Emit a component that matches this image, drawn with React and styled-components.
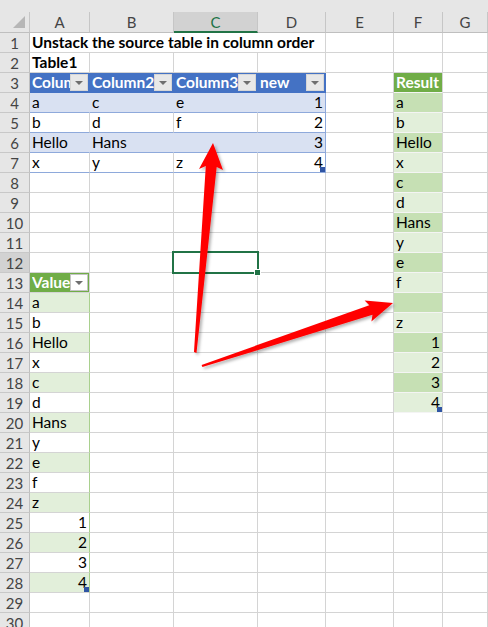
import React from "react";
import styled, { createGlobalStyle } from "styled-components";

const GRID = "#d4d4d4";
const BLUE_HEAD = "#4472c4";
const BLUE_BAND = "#d9e1f2";
const BLUE_LINE = "#8ea9db";
const GREEN_HEAD = "#70ad47";
const GREEN_DARK = "#c6e0b4";
const GREEN_LIGHT = "#e2efda";
const GREEN_EDGE = "#a9d08e";
const XL_GREEN = "#217346";

const GlobalStyle = createGlobalStyle`
  html, body { margin: 0; padding: 0; background: #fff; overflow: hidden; }
  body { font-family: Lato, "Liberation Sans", sans-serif; }
`;

const Sheet = styled.div`
  position: relative;
  width: 488px;
  height: 627px;
  overflow: hidden;
  display: grid;
  grid-template-columns: 30px 60px 84px 84px 68px 68px 49px 45px;
  grid-template-rows: 12px 21px repeat(30, 20px);
  font-family: Lato, "Liberation Sans", sans-serif;
  font-size: 15.5px;
  color: #000;
  background: #fff;
`;

const TopStrip = styled.div`
  grid-column: 1 / -1;
  background: #e6e6e6;
`;

const Corner = styled.div`
  position: relative;
  box-sizing: border-box;
  background: #e6e6e6;
  border-right: 1px solid #c6c6c6;
  border-bottom: 1px solid #bfbfbf;
  &::after {
    content: "";
    position: absolute;
    right: 4px;
    bottom: 4px;
    border-style: solid;
    border-width: 0 0 12px 12px;
    border-color: transparent transparent #b6b6b6 transparent;
  }
`;

const ColHead = styled.div`
  box-sizing: border-box;
  display: flex;
  align-items: center;
  justify-content: center;
  line-height: 18px;
  font-size: 15px;
  background: ${(p) => (p.$active ? "#d2d2d2" : "#e6e6e6")};
  color: ${(p) => (p.$active ? XL_GREEN : "#444")};
  border-right: 1px solid #c6c6c6;
  border-bottom: ${(p) => (p.$active ? `2px solid ${XL_GREEN}` : "1px solid #bfbfbf")};
`;

const RowHead = styled.div`
  box-sizing: border-box;
  display: flex;
  align-items: center;
  justify-content: center;
  line-height: 18px;
  font-size: 15px;
  background: ${(p) => (p.$active ? "#d2d2d2" : "#e6e6e6")};
  color: #444;
  border-right: 1px solid #bfbfbf;
  border-bottom: 1px solid #c8c8c8;
`;

const Cell = styled.div`
  position: relative;
  box-sizing: border-box;
  display: flex;
  align-items: flex-end;
  justify-content: ${(p) => (p.$align === "right" ? "flex-end" : "flex-start")};
  padding: 0 2px 1px 2px;
  line-height: 18px;
  white-space: nowrap;
  grid-column: span ${(p) => p.$span || 1};
  background: ${(p) => p.$bg};
  border-right: 1px solid ${(p) => p.$br};
  border-bottom: 1px solid ${(p) => p.$bb};
  font-weight: ${(p) => (p.$bold ? 700 : 400)};
  z-index: ${(p) => (p.$raised ? 2 : "auto")};
`;

const HeadCell = styled.div`
  box-sizing: border-box;
  display: flex;
  align-items: center;
  padding: 0 1px 0 2px;
  background: ${(p) => p.$bg};
  border-right: 1px solid ${(p) => p.$br};
  border-bottom: 1px solid ${(p) => p.$bb};
  color: #fff;
  font-weight: 700;
`;

const HeadLabel = styled.div`
  flex: 1;
  min-width: 0;
  overflow: hidden;
  white-space: nowrap;
  align-self: flex-end;
  line-height: 18px;
  padding-bottom: 1px;
`;

const DropButton = styled.div`
  flex: none;
  box-sizing: border-box;
  width: 18px;
  height: 17px;
  display: flex;
  align-items: center;
  justify-content: center;
  background: ${(p) => (p.$variant === "white" ? "#ffffff" : "#e8e8e8")};
  border: 1px solid ${(p) => (p.$variant === "white" ? "#c4c4c4" : "#d6d6d6")};
`;

const Caret = styled.span`
  width: 0;
  height: 0;
  border-left: 4px solid transparent;
  border-right: 4px solid transparent;
  border-top: 4px solid #6f6f6f;
  margin-top: 1px;
`;

const ResizeHandle = styled.span`
  position: absolute;
  right: 0;
  bottom: 0;
  width: 5px;
  height: 5px;
  background: #2f55a4;
`;

const Selection = styled.span`
  position: absolute;
  left: -2px;
  top: -2px;
  right: -2px;
  bottom: -2px;
  border: 2px solid ${XL_GREEN};
  pointer-events: none;
  &::after {
    content: "";
    position: absolute;
    right: -4px;
    bottom: -4px;
    width: 5px;
    height: 5px;
    background: ${XL_GREEN};
    border: 1px solid #fff;
  }
`;

const Overlay = styled.svg`
  position: absolute;
  left: 0;
  top: 0;
  pointer-events: none;
  z-index: 5;
`;

const COLS = ["A", "B", "C", "D", "E", "F", "G"];
const TABLE = [
  ["a", "c", "e", 1],
  ["b", "d", "f", 2],
  ["Hello", "Hans", "", 3],
  ["x", "y", "z", 4],
];
const RESULT = ["a", "b", "Hello", "x", "c", "d", "Hans", "y", "e", "f", "", "z", 1, 2, 3, 4];
const VALUES = ["a", "b", "Hello", "x", "c", "d", "Hans", "y", "e", "f", "z", 1, 2, 3, 4];

function cellSpec(r, c) {
  let s = { text: "", bg: "#fff", br: GRID, bb: GRID };
  if (r === 1) {
    if (c === 0)
      return { ...s, text: "Unstack the source table in column order", bold: true, span: 4 };
    if (c <= 3) return null;
  }
  if (r === 2 && c === 0) s = { ...s, text: "Table1", bold: true };
  if (r === 3 && c <= 3)
    s = {
      ...s,
      head: true,
      text: ["Column1", "Column2", "Column3", "new"][c],
      bg: BLUE_HEAD,
      br: BLUE_HEAD,
      bb: BLUE_HEAD,
      drop: "gray",
    };
  if (r >= 4 && r <= 7 && c <= 3) {
    const band = r % 2 === 0;
    const bg = band ? BLUE_BAND : "#fff";
    const v = TABLE[r - 4][c];
    s = {
      ...s,
      text: v,
      align: typeof v === "number" ? "right" : "left",
      bg,
      br: c === 3 ? BLUE_LINE : band ? bg : GRID,
      bb: BLUE_LINE,
      handle: r === 7 && c === 3,
    };
  }
  if (c === 5 && r === 3)
    s = { ...s, head: true, text: "Result", bg: GREEN_HEAD, br: GRID, bb: "#f4f4f4" };
  if (c === 5 && r >= 4 && r <= 19) {
    const v = RESULT[r - 4];
    s = {
      ...s,
      text: v,
      align: typeof v === "number" ? "right" : "left",
      bg: r % 2 === 0 ? GREEN_DARK : GREEN_LIGHT,
      bb: "#f4f4f4",
      handle: r === 19,
    };
  }
  if (c === 0 && r === 13)
    s = { ...s, head: true, text: "Value", bg: GREEN_HEAD, br: GRID, bb: GRID, drop: "white" };
  if (c === 0 && r >= 14 && r <= 28) {
    const v = VALUES[r - 14];
    s = {
      ...s,
      text: v,
      align: typeof v === "number" ? "right" : "left",
      bg: r % 2 === 0 ? GREEN_LIGHT : "#fff",
      br: GREEN_EDGE,
      handle: r === 28,
    };
  }
  if (r === 12 && c === 2) s = { ...s, selected: true };
  return s;
}

function SheetCell({ s }) {
  if (s.head) {
    return (
      <HeadCell $bg={s.bg} $br={s.br} $bb={s.bb}>
        <HeadLabel>{s.text}</HeadLabel>
        {s.drop && (
          <DropButton $variant={s.drop}>
            <Caret />
          </DropButton>
        )}
      </HeadCell>
    );
  }
  return (
    <Cell
      $bg={s.bg}
      $br={s.br}
      $bb={s.bb}
      $align={s.align}
      $bold={s.bold}
      $span={s.span}
      $raised={s.selected}
    >
      {s.text}
      {s.handle && <ResizeHandle />}
      {s.selected && <Selection />}
    </Cell>
  );
}

function Arrows() {
  return (
    <Overlay width="488" height="627" viewBox="0 0 488 627">
      <defs>
        <filter id="arrowShadow" x="-30%" y="-30%" width="160%" height="160%">
          <feDropShadow dx="2" dy="2" stdDeviation="1.5" floodColor="#000" floodOpacity="0.3" />
        </filter>
      </defs>
      <polygon
        points="194,352 205.8,166 199,169 213,143 223,170 216.7,167 196.5,353"
        fill="#ff0000"
        filter="url(#arrowShadow)"
      />
      <polygon
        points="201.6,364.9 369.3,305.3 364.6,300.5 393,303 371.4,321.5 372.5,314.8 202.4,367.1"
        fill="#ff0000"
        filter="url(#arrowShadow)"
      />
    </Overlay>
  );
}

export default function App() {
  const items = [];
  for (let r = 1; r <= 30; r++) {
    items.push(
      <RowHead key={`rh${r}`} $active={r === 12}>
        {r}
      </RowHead>
    );
    for (let c = 0; c < 7; c++) {
      const s = cellSpec(r, c);
      if (s === null) continue;
      items.push(<SheetCell key={`c${r}-${c}`} s={s} />);
    }
  }
  return (
    <>
      <GlobalStyle />
      <Sheet>
        <TopStrip />
        <Corner />
        {COLS.map((l) => (
          <ColHead key={l} $active={l === "C"}>
            {l}
          </ColHead>
        ))}
        {items}
        <Arrows />
      </Sheet>
    </>
  );
}
